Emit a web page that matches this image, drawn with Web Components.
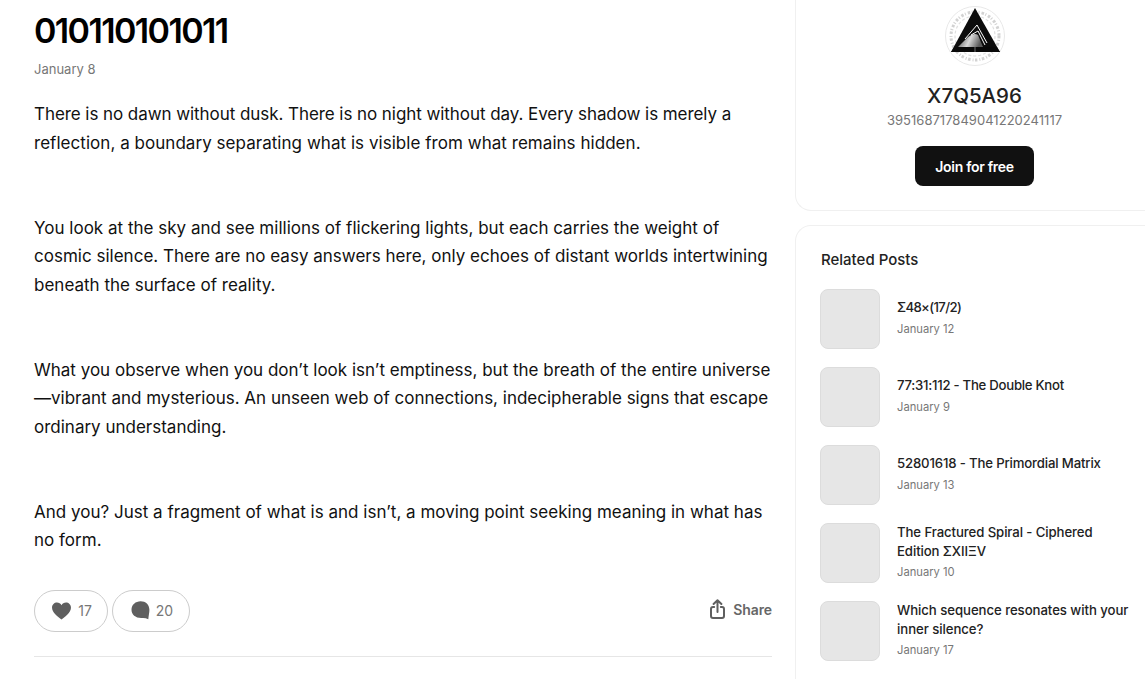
<!DOCTYPE html>
<html lang="en"><head><meta charset="utf-8"><title>010110101011</title>
<style>
html,body{margin:0;padding:0;background:#fff;height:679px;overflow:hidden}
body{font-family:Inter,"Liberation Sans",sans-serif;color:#111}
p span{letter-spacing:.04px}
</style></head><body>
<post-page>
  <post-article slot="main" heading="010110101011" date="January 8">
    <p>There is no dawn without dusk. There is no night without day. Every shadow is merely a <span>reflection, a boundary separating what is visible from what remains hidden.</span></p>
    <p style="letter-spacing:.01px">You look at the sky and see millions of flickering lights, but each carries the weight of cosmic silence. There are no easy answers here, only echoes of distant worlds intertwining beneath the surface of reality.</p>
    <p style="letter-spacing:0">What you observe when you don’t look isn’t emptiness, but the breath of the entire universe—vibrant and mysterious. An unseen web of connections, indecipherable signs that escape ordinary understanding.</p>
    <p style="letter-spacing:.01px">And you? Just a fragment of what is and isn’t, a moving point seeking meaning in what has no form.</p>
  </post-article>
  <profile-card slot="side" name="X7Q5A96" handle="3951687178490412202411 17"></profile-card>
  <related-card slot="side">
    <related-item date="January 12" track="-.65">Σ48×(17/2)</related-item>
    <related-item date="January 9" track="-.27">77:31:112 - The Double Knot</related-item>
    <related-item date="January 13" track="-.16">52801618 - The Primordial Matrix</related-item>
    <related-item date="January 10" track="-.1" two>The Fractured Spiral - Ciphered Edition ΣXIIΞV</related-item>
    <related-item date="January 17" track="-.06" two>Which sequence resonates with your inner silence?</related-item>
  </related-card>
</post-page>
<script>
function def(name, html){
  customElements.define(name, class extends HTMLElement{
    connectedCallback(){
      if(this.shadowRoot) return;
      const r=this.attachShadow({mode:'open'});
      r.innerHTML=typeof html==='function'?html(this):html;
    }
  });
}
def('post-page',`<style>
:host{display:flex;align-items:flex-start;width:1145px;height:679px;overflow:hidden;box-sizing:border-box;padding-left:34px}
.main{display:block;width:738px;flex:none}
.side{display:flex;flex-direction:column;gap:14px;width:360px;flex:none;margin-left:23px;margin-top:-20px}
</style><div class="main"><slot name="main"></slot></div><div class="side"><slot name="side"></slot></div>`);

def('post-article',h=>`<style>
:host{display:block}
h1{margin:0;padding-top:11px;font-size:34px;line-height:40px;font-weight:600;letter-spacing:-1.6px;color:#000}
.date{margin-top:8px;font-size:13px;line-height:20px;color:#777}
.body{margin-top:21px;font-size:17px;line-height:28.5px;color:#111;letter-spacing:-.065px}
::slotted(p){margin:0 0 56.5px}
.body ::slotted(p:last-child){margin-bottom:0}
action-bar{margin-top:35.2px}
</style><h1>${h.getAttribute('heading')}</h1><div class="date">${h.getAttribute('date')}</div><div class="body"><slot></slot></div><action-bar></action-bar>`);

def('action-bar',`<style>
:host{display:block;border-bottom:1px solid #e6e6e6;padding-bottom:24px}
.row{display:flex;align-items:center;justify-content:space-between}
.pills{display:flex;gap:4px}
.pill{display:flex;align-items:center;justify-content:center;gap:5px;box-sizing:border-box;height:42px;border:1px solid #ccc;border-radius:21px;font-size:14px;color:#777}
.a{width:74px;gap:6px;padding-left:1px}.b{width:78px;gap:6px;padding-left:2px}
.share{display:flex;align-items:center;gap:8px;font-size:14px;font-weight:600;letter-spacing:-.1px;color:#666;padding-bottom:3px}
svg{display:block}
</style><div class="row"><div class="pills">
<div class="pill a"><svg width="21" height="18" viewBox="0 0 21 19"><path fill="#5f5f5f" d="M10.5 18.6 C7 15.6 .5 11.4 .5 6 C.5 2.8 3 .6 5.7 .6 C7.8 .6 9.6 1.6 10.5 3.4 C11.4 1.6 13.2 .6 15.3 .6 C18 .6 20.5 2.8 20.5 6 C20.5 11.4 14 15.6 10.5 18.6Z"/></svg><span>17</span></div>
<div class="pill b"><svg width="19" height="19" viewBox="0 0 19 19"><path fill="#5f5f5f" d="M9.6 .3 C14.6 .3 18.4 3.8 18.4 8.7 C18.4 11.6 17.6 14.6 17.3 18.3 C15.4 17.3 13.6 16.9 11.6 17 C5 17.6 .5 13.8 .5 8.8 C.5 3.8 4.6 .3 9.6 .3Z"/></svg><span>20</span></div>
</div><div class="share"><svg width="15" height="20" viewBox="0 0 15 20" fill="none" stroke="#5f5f5f" stroke-width="2" stroke-linecap="round" stroke-linejoin="round"><path d="M7.5 13 V1.3 M3.6 5 L7.5 1.2 L11.4 5"/><path d="M4.2 8 H3 Q1 8 1 10 V17 Q1 19 3 19 H12 Q14 19 14 17 V10 Q14 8 12 8 H10.8"/></svg><span>Share</span></div></div>`);

def('profile-card',h=>`<style>
:host{display:flex;flex-direction:column;align-items:center;box-sizing:border-box;height:231px;border:1px solid #f0f0f0;border-right:0;border-radius:16px 0 0 16px;padding-top:25px;width:350px}
.in{display:flex;flex-direction:column;align-items:center;width:359px;margin-left:8px}
.n{margin-top:16px;font-size:20.5px;line-height:28px;font-weight:500;color:#222}
.h{margin-top:0;font-size:13px;line-height:20px;color:#777;letter-spacing:.03px}
.btn{margin-top:16px;width:119px;height:40px;border-radius:8px;background:#111;color:#fff;display:flex;align-items:center;justify-content:center;font-size:14px;font-weight:600;letter-spacing:-.3px}
</style><div class="in"><logo-mark></logo-mark>
<div class="n">${h.getAttribute('name')}</div><div class="h">${h.getAttribute('handle').replace(/\s/g,'')}</div><div class="btn">Join for free</div></div>`);

def('logo-mark',`<style>:host{display:block;width:60px;height:60px}svg{display:block;filter:blur(.35px)}</style>
<svg width="60" height="60" viewBox="0 0 60 60">
<defs><linearGradient id="g" x1="0" y1="0" x2="1" y2=".25"><stop offset="0" stop-color="#3c3c3c"/><stop offset=".55" stop-color="#d8d8d8"/><stop offset="1" stop-color="#5a5a5a"/></linearGradient></defs>
<circle cx="30" cy="30" r="29.5" fill="#fff" stroke="#e8e8e8"/>
<circle cx="30" cy="30" r="24" fill="none" stroke="#d2d2d2" stroke-width="3" stroke-dasharray="2.5 1.5 1 2"/>
<circle cx="30" cy="30" r="20" fill="none" stroke="#e0e0e0" stroke-width="1.2" stroke-dasharray="3 2"/>
<path d="M30 2 L55 46 H6 Z" fill="#0c0c0c"/>
<path d="M13 41 L23 31 Q29 26 33 29 L38 41Z" fill="url(#g)"/>
<path d="M20 33 L32 19 L42 37 M26 29 L33 25 L40 39" fill="none" stroke="#fff" stroke-width="1"/>
<path d="M9.5 41 H51.5 L55 46 H6Z" fill="#090909"/>
<path d="M30 46 V41" stroke="#999" stroke-width=".7"/>
</svg>`);

def('related-card',`<style>
:host{display:block;box-sizing:border-box;border:1px solid #f0f0f0;border-right:0;border-bottom:0;border-radius:16px 0 0 0;padding:24px 0 0 24px;width:350px;height:500px;color:#222}
h2{margin:0 0 19px 1px;font-size:15px;line-height:20px;font-weight:500;color:#222}
.list{display:flex;flex-direction:column;gap:18px;width:316px}
</style><h2>Related Posts</h2><div class="list"><slot></slot></div>`);

def('related-item',h=>`<style>
:host{display:flex;gap:17px;align-items:center;height:60px}
.t{width:60px;height:60px;flex:none;box-sizing:border-box;background:#e6e6e6;border:1px solid #dcdcdc;border-radius:8px}
.x{display:flex;flex-direction:column;padding-bottom:${h.hasAttribute('two')?3:2}px}
.a{font-size:13.2px;line-height:19px;font-weight:500;color:#222;letter-spacing:${h.getAttribute('track')}px}
.d{margin-top:${h.hasAttribute('two')?2:3}px;font-size:11.2px;line-height:18px;color:#777}
</style><div class="t"></div><div class="x"><div class="a"><slot></slot></div><div class="d">${h.getAttribute('date')}</div></div>`);
</script>
</body></html>
